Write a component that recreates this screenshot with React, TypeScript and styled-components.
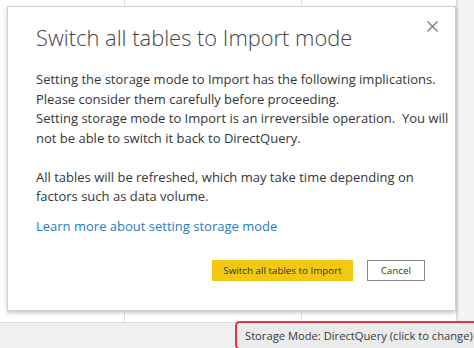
import React from 'react'
import styled, { createGlobalStyle } from 'styled-components'

const GlobalStyle = createGlobalStyle`
  html, body {
    margin: 0;
    padding: 0;
    background: #ffffff;
  }
  * {
    box-sizing: border-box;
  }
`

const Screen = styled.div`
  position: relative;
  width: 474px;
  height: 348px;
  overflow: hidden;
  display: flex;
  flex-direction: column;
  font-family: 'Segoe UI', 'Open Sans', 'Noto Sans', sans-serif;
  background: #ffffff;
`

const Workspace = styled.div`
  flex: 1;
  display: flex;
  border-bottom: 1px solid #dcdcdc;
`

const Column = styled.div<{ width: number }>`
  width: ${({ width }) => width}px;
  flex: 0 0 auto;
  background: #ffffff;
  border-right: 1px solid #e2e2e2;
`

const SideStrip = styled.div`
  flex: 1;
  background: #f3f3f3;
  border-left: 1px solid #d8d8d8;
`

const StatusBar = styled.div`
  height: 25px;
  flex: 0 0 auto;
  display: flex;
  justify-content: flex-end;
  background: #f0f0f0;
`

const StatusPill = styled.div`
  width: 239px;
  margin-top: -2px;
  height: 29px;
  border: 2px solid #e3363e;
  border-right: none;
  border-radius: 5px 0 0 5px;
  background: #ebebeb;
  padding: 5px 0 0 8px;
  font-size: 11.2px;
  color: #3a3a3a;
  white-space: nowrap;
  overflow: hidden;
`

const Dialog = styled.div`
  position: absolute;
  left: 7px;
  top: 6px;
  width: 449px;
  height: 305px;
  background: #ffffff;
  border: 1px solid #cfcfcf;
  box-shadow: 0 2px 4px rgba(0, 0, 0, 0.22);
  padding: 15px 30px 29px 28px;
  display: flex;
  flex-direction: column;
`

const CloseButton = styled.button`
  position: absolute;
  top: 8px;
  right: 12px;
  width: 22px;
  height: 22px;
  border: none;
  background: transparent;
  padding: 0;
  display: flex;
  align-items: center;
  justify-content: center;
`

const Title = styled.h1`
  margin: 0;
  font-size: 21.9px;
  line-height: 32px;
  font-weight: 300;
  color: #444444;
  white-space: nowrap;
`

const Body = styled.div`
  margin-top: 16px;
  font-size: 13px;
  line-height: 19.5px;
  color: #363636;
  white-space: nowrap;
`

const Paragraph = styled.p`
  margin: 0 0 19.5px 0;
  &:last-child {
    margin-bottom: 0;
  }
`

const LearnLink = styled.a`
  align-self: flex-start;
  margin-top: 10px;
  font-size: 13px;
  line-height: 19.5px;
  color: #2a7bc4;
  text-decoration: none;
`

const Actions = styled.div`
  margin-top: auto;
  display: flex;
  justify-content: flex-end;
  gap: 14px;
`

const Button = styled.button<{ primary?: boolean }>`
  height: 21px;
  padding: 0 ${({ primary }) => (primary ? '10px' : '13px')};
  font-family: inherit;
  font-size: 9.8px;
  color: #333333;
  background: ${({ primary }) => (primary ? '#f2c811' : '#ffffff')};
  border: 1px solid ${({ primary }) => (primary ? '#f2c811' : '#8a8a8a')};
  border-radius: 0;
  cursor: pointer;
`

export default function App() {
  return (
    <Screen>
      <GlobalStyle />
      <Workspace>
        <Column width={125} />
        <Column width={177} />
        <Column width={155} />
        <SideStrip />
      </Workspace>
      <StatusBar>
        <StatusPill>Storage Mode: DirectQuery (click to change)</StatusPill>
      </StatusBar>

      <Dialog>
        <CloseButton aria-label="Close">
          <svg width="11" height="11" viewBox="0 0 11 11">
            <path d="M0.5 0.5L10.5 10.5M10.5 0.5L0.5 10.5" stroke="#707070" strokeWidth="1.1" />
          </svg>
        </CloseButton>
        <Title>Switch all tables to Import mode</Title>
        <Body>
          <Paragraph>
            Setting the storage mode to Import has the following implications.
            <br />
            Please consider them carefully before proceeding.
            <br />
            Setting storage mode to Import is an irreversible operation.&nbsp; You will
            <br />
            not be able to switch it back to DirectQuery.
          </Paragraph>
          <Paragraph>
            All tables will be refreshed, which may take time depending on
            <br />
            factors such as data volume.
          </Paragraph>
        </Body>
        <LearnLink href="#">Learn more about setting storage mode</LearnLink>
        <Actions>
          <Button primary>Switch all tables to Import</Button>
          <Button>Cancel</Button>
        </Actions>
      </Dialog>
    </Screen>
  )
}
